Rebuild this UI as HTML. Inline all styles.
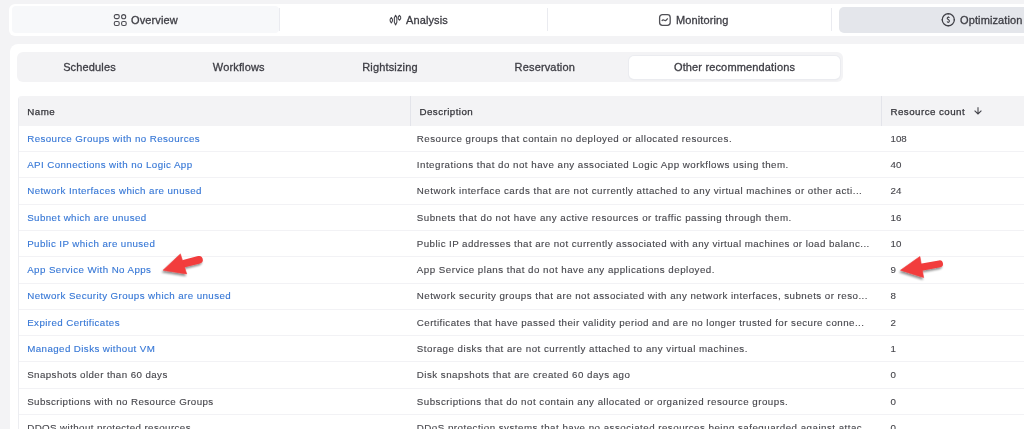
<!DOCTYPE html>
<html><head><meta charset="utf-8">
<style>
*{box-sizing:border-box;margin:0;padding:0}
html,body{width:1024px;height:429px;overflow:hidden}
body{background:#f3f3f5;position:relative;font-family:"Liberation Sans",sans-serif;color:#3a3a3f}
.abs{position:absolute}
.topbar{left:9px;top:4px;width:1040px;height:32px;background:#fff;border-radius:6px}
.ttab{top:6px;height:27px;border-radius:4px}
.sep{top:8.3px;width:1px;height:23px;background:#eaebf0}
.tlabel{font-size:11px;letter-spacing:0.12px;line-height:14px;top:13px;white-space:nowrap;color:#3d3d44;-webkit-text-stroke:0.3px #3d3d44}
.card{left:10px;top:43.5px;width:1030px;height:400px;background:#fff;border-radius:8px}
.subbar{left:17px;top:52.4px;width:826px;height:29.3px;background:#f3f3f5;border-radius:6px}
.active{left:628.5px;top:55.6px;width:211.5px;height:23.3px;background:#fff;border-radius:5px;box-shadow:0 0 0 1px #ebecf0,0 1px 2px rgba(0,0,0,.06)}
.slabel{font-size:11px;letter-spacing:0.15px;line-height:14px;top:59.5px;white-space:nowrap;color:#3d3d44;-webkit-text-stroke:0.3px #3d3d44;transform:translateX(-50%)}
.table{left:18px;top:96px;width:1020px;height:340px;border-left:1px solid #ecedf1;border-radius:4px 0 0 0;overflow:hidden}
.thead{left:0;top:0;width:100%;height:29.6px;background:#f3f3f5}
.hsep{top:0;width:1px;height:29.6px;background:#e3e4ea}
.hl{font-size:9.75px;letter-spacing:0.45px;line-height:12px;top:9.9px;white-space:nowrap;color:#35353b;-webkit-text-stroke:0.25px #35353b}
.row{left:0;width:100%;height:1px;background:#f2f2f5}
.cell{font-size:9.75px;line-height:12px;white-space:nowrap;color:#46464c;-webkit-text-stroke:0.12px #46464c}
.link{color:#3677d6;-webkit-text-stroke:0.12px #3677d6}
.nm{letter-spacing:0.41px}
.ds{letter-spacing:0.48px}
</style></head><body><div id="wrap" style="position:absolute;left:0;top:0;width:1024px;height:429px;filter:blur(0.35px)">
<div class="abs topbar"></div>
<div class="abs ttab" style="left:12px;width:267px;background:#f7f8fa"></div>
<div class="abs sep" style="left:279px"></div>
<div class="abs sep" style="left:547px"></div>
<div class="abs sep" style="left:831px"></div>
<div class="abs ttab" style="left:839px;width:200px;top:6.5px;height:26.5px;background:#e4e6eb;border-radius:5px"></div>

<!-- icons top -->
<svg class="abs" style="left:110px;top:10px" width="20" height="20" viewBox="0 0 20 20" fill="none" stroke="#4d4d54" stroke-width="1.1">
<rect x="4.3" y="4.6" width="4.9" height="4.0" rx="1.5"/>
<circle cx="13.65" cy="6.7" r="2.05"/>
<rect x="4.3" y="11.5" width="4.9" height="4.0" rx="1.5"/>
<rect x="11.6" y="11.5" width="4.6" height="4.0" rx="1.5"/>
</svg>
<div class="abs tlabel" style="left:131px">Overview</div>

<svg class="abs" style="left:385px;top:10px" width="20" height="20" viewBox="0 0 20 20" fill="none" stroke="#45454c" stroke-width="1.05" stroke-linejoin="round">
<path d="M6.3 7.5 L7.45 9.3 L7.45 11.1 L6.3 13 L5.15 11.1 L5.15 9.3 Z"/>
<path d="M10.6 5.2 L11.85 7.8 L11.85 12.3 L10.6 14.9 L9.35 12.3 L9.35 7.8 Z"/>
<path d="M14.45 5.4 L15.65 6.9 L15.65 8.7 L14.45 10.3 L13.25 8.7 L13.25 6.9 Z"/>
</svg>
<div class="abs tlabel" style="left:406px">Analysis</div>

<svg class="abs" style="left:652px;top:10px" width="20" height="20" viewBox="0 0 20 20" fill="none" stroke="#505056" stroke-width="1.3">
<rect x="7.6" y="4.6" width="10.6" height="10.8" rx="2.8"/>
<path d="M9.8 11 Q11 9 12.3 10.3 Q13.6 11.2 14.6 9.6 L15.8 8.6"/>
</svg>
<div class="abs tlabel" style="left:676px">Monitoring</div>

<svg class="abs" style="left:938px;top:10px" width="20" height="20" viewBox="0 0 20 20" fill="none" stroke="#404047" stroke-width="1.2">
<circle cx="10.3" cy="9.75" r="6.05"/>
<path d="M10.3 3.2 V4.4 M10.3 15.1 V16.3 M3.7 9.75 H4.9 M15.7 9.75 H16.9" stroke-width="1.6"/>
<path d="M11.5 7.9 Q11.2 7.2 10.3 7.2 Q9.2 7.2 9.2 8.2 Q9.2 9 10.3 9.6 Q11.4 10.2 11.4 11.1 Q11.4 12.2 10.3 12.2 Q9.4 12.2 9.1 11.6" stroke-width="1.1"/>
<path d="M10.3 6.4 V7.2 M10.3 12.2 V13" stroke-width="0.9"/>
</svg>
<div class="abs tlabel" style="left:960px">Optimization</div>

<!-- card -->
<div class="abs card"></div>
<div class="abs subbar"></div>
<div class="abs active"></div>
<div class="abs slabel" style="left:89.5px">Schedules</div>
<div class="abs slabel" style="left:238.8px">Workflows</div>
<div class="abs slabel" style="left:390px">Rightsizing</div>
<div class="abs slabel" style="left:544.8px">Reservation</div>
<div class="abs slabel" style="left:734.5px">Other recommendations</div>

<!-- table -->
<div class="abs table" id="tbl">
<div class="abs thead"></div>
<div class="abs hsep" style="left:391px"></div>
<div class="abs hsep" style="left:862px"></div>
<div class="abs hl" style="left:8.3px">Name</div>
<div class="abs hl" style="left:400.5px">Description</div>
<div class="abs hl" style="left:871.5px">Resource count</div>
<svg class="abs" style="left:954px;top:10px" width="10" height="10" viewBox="0 0 10 10" fill="none" stroke="#45454c" stroke-width="1.1"><path d="M5 1.3 V7.8 M1.6 4.6 L5 8 L8.4 4.6"/></svg>
</div>
<!--ROWS-->
<div class="abs cell nm link" style="left:27.2px;top:132.65px">Resource Groups with no Resources</div>
<div class="abs cell ds" style="left:416.8px;top:132.65px;">Resource groups that contain no deployed or allocated resources.</div>
<div class="abs cell" style="left:890.5px;top:132.65px">108</div>
<div class="abs row" style="left:19px;top:151.05px"></div>
<div class="abs cell nm link" style="left:27.2px;top:158.95px">API Connections with no Logic App</div>
<div class="abs cell ds" style="left:416.8px;top:158.95px;">Integrations that do not have any associated Logic App workflows using them.</div>
<div class="abs cell" style="left:890.5px;top:158.95px">40</div>
<div class="abs row" style="left:19px;top:177.35px"></div>
<div class="abs cell nm link" style="left:27.2px;top:185.25px">Network Interfaces which are unused</div>
<div class="abs cell ds" style="left:416.8px;top:185.25px;">Network interface cards that are not currently attached to any virtual machines or other acti...</div>
<div class="abs cell" style="left:890.5px;top:185.25px">24</div>
<div class="abs row" style="left:19px;top:203.65px"></div>
<div class="abs cell nm link" style="left:27.2px;top:211.55px">Subnet which are unused</div>
<div class="abs cell ds" style="left:416.8px;top:211.55px;">Subnets that do not have any active resources or traffic passing through them.</div>
<div class="abs cell" style="left:890.5px;top:211.55px">16</div>
<div class="abs row" style="left:19px;top:229.95px"></div>
<div class="abs cell nm link" style="left:27.2px;top:237.85px">Public IP which are unused</div>
<div class="abs cell ds" style="left:416.8px;top:237.85px;letter-spacing:0.43px;">Public IP addresses that are not currently associated with any virtual machines or load balanc...</div>
<div class="abs cell" style="left:890.5px;top:237.85px">10</div>
<div class="abs row" style="left:19px;top:256.25px"></div>
<div class="abs cell nm link" style="left:27.2px;top:264.15px">App Service With No Apps</div>
<div class="abs cell ds" style="left:416.8px;top:264.15px;">App Service plans that do not have any applications deployed.</div>
<div class="abs cell" style="left:890.5px;top:264.15px">9</div>
<div class="abs row" style="left:19px;top:282.55px"></div>
<div class="abs cell nm link" style="left:27.2px;top:290.45px">Network Security Groups which are unused</div>
<div class="abs cell ds" style="left:416.8px;top:290.45px;letter-spacing:0.465px;">Network security groups that are not associated with any network interfaces, subnets or reso...</div>
<div class="abs cell" style="left:890.5px;top:290.45px">8</div>
<div class="abs row" style="left:19px;top:308.85px"></div>
<div class="abs cell nm link" style="left:27.2px;top:316.75px">Expired Certificates</div>
<div class="abs cell ds" style="left:416.8px;top:316.75px;letter-spacing:0.44px;">Certificates that have passed their validity period and are no longer trusted for secure conne...</div>
<div class="abs cell" style="left:890.5px;top:316.75px">2</div>
<div class="abs row" style="left:19px;top:335.15px"></div>
<div class="abs cell nm link" style="left:27.2px;top:343.05px">Managed Disks without VM</div>
<div class="abs cell ds" style="left:416.8px;top:343.05px;letter-spacing:0.495px;">Storage disks that are not currently attached to any virtual machines.</div>
<div class="abs cell" style="left:890.5px;top:343.05px">1</div>
<div class="abs row" style="left:19px;top:361.45px"></div>
<div class="abs cell nm" style="left:27.2px;top:369.35px">Snapshots older than 60 days</div>
<div class="abs cell ds" style="left:416.8px;top:369.35px;">Disk snapshots that are created 60 days ago</div>
<div class="abs cell" style="left:890.5px;top:369.35px">0</div>
<div class="abs row" style="left:19px;top:387.75px"></div>
<div class="abs cell nm" style="left:27.2px;top:395.65px">Subscriptions with no Resource Groups</div>
<div class="abs cell ds" style="left:416.8px;top:395.65px;">Subscriptions that do not contain any allocated or organized resource groups.</div>
<div class="abs cell" style="left:890.5px;top:395.65px">0</div>
<div class="abs row" style="left:19px;top:414.05px"></div>
<div class="abs cell nm" style="left:27.2px;top:421.95px">DDOS without protected resources</div>
<div class="abs cell ds" style="left:416.8px;top:421.95px;">DDoS protection systems that have no associated resources being safeguarded against attac...</div>
<div class="abs cell" style="left:890.5px;top:421.95px">0</div>
<div class="abs row" style="left:19px;top:440.35px"></div>
<!--/ROWS-->
<svg class="abs" style="left:0;top:0;overflow:visible" width="1024" height="429" viewBox="0 0 1024 429">
<defs><filter id="sh" x="-30%" y="-30%" width="160%" height="160%"><feGaussianBlur in="SourceAlpha" stdDeviation="1.2"/><feOffset dx="-1" dy="2" result="b"/><feComponentTransfer><feFuncA type="linear" slope="0.45"/></feComponentTransfer><feMerge><feMergeNode/><feMergeNode in="SourceGraphic"/></feMerge></filter></defs>
<g filter="url(#sh)" fill="#f23c3c" stroke="#f23c3c">
<path d="M184 263.6 L199 259.8" stroke-width="7.6" stroke-linecap="round" fill="none"/>
<path d="M163.1 270.2 L180.4 253.9 L186.7 273.9 Z" stroke-width="0.6" stroke-linejoin="round"/>
<path d="M922.5 267 L939.5 263.9" stroke-width="7" stroke-linecap="round" fill="none"/>
<path d="M900.5 270.2 L919.9 256.5 L923.6 277.5 Z" stroke-width="0.6" stroke-linejoin="round"/>
</g>
</svg>
</div></body></html>
